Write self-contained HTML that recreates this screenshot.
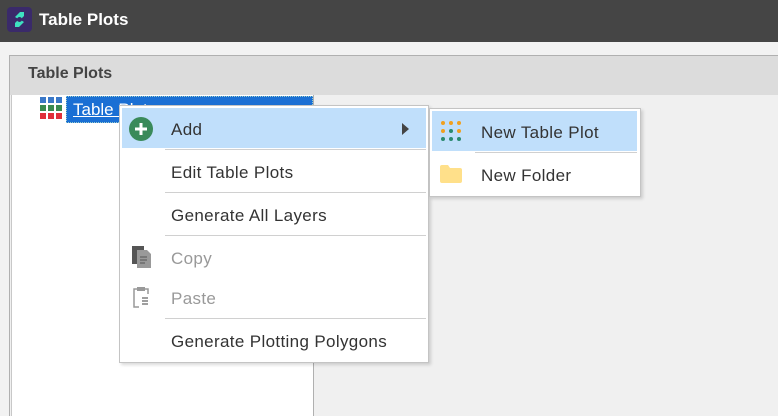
<!DOCTYPE html>
<html><head><style>
*{margin:0;padding:0;box-sizing:border-box}
html,body{width:778px;height:416px;overflow:hidden}
body{background:#f0f0f0;font-family:"Liberation Sans",sans-serif;position:relative}
.abs{position:absolute}
.t{position:absolute;font-size:17px;letter-spacing:0.35px;color:#333;white-space:nowrap;line-height:20px}
.sep{position:absolute;height:1px;background:#d0d0d0}
</style></head><body>
<div class="abs" style="left:0;top:0;width:778px;height:42px;background:#454545"></div>
<svg class="abs" style="left:7px;top:7px" width="25" height="25" viewBox="0 0 25 25"><rect width="25" height="25" rx="4" fill="#3a2a6a"/><path d="M8 10 L13 5 L17 5 L17 9 L13 13 Z" fill="#3ee0c0"/><path d="M17 15 L12 20 L8 20 L8 16 L12 12 Z" fill="#3ee0c0"/><circle cx="12.5" cy="12.5" r="2.5" fill="#3a2a6a"/></svg>
<div class="abs" style="left:39px;top:10px;color:#fff;font-weight:bold;font-size:17px">Table Plots</div>
<div class="abs" style="left:0;top:42px;width:778px;height:374px;background:#f2f2f2"></div>
<div class="abs" style="left:9px;top:55px;width:780px;height:380px;border:1px solid #b0b0b0;background:#f0f0f0"></div>
<div class="abs" style="left:10px;top:56px;width:770px;height:39px;background:#dcdcdc"></div>
<div class="abs" style="left:28px;top:65px;font-weight:bold;font-size:16px;color:#444">Table Plots</div>
<div class="abs" style="left:11px;top:95px;width:303px;height:340px;background:#fff;border:1px solid #b0b0b0;border-top:none;border-left-color:#c8c8c8"></div>
<svg class="abs" style="left:40px;top:97px" width="22" height="22" viewBox="0 0 22 22">
<g fill="#3a78c8"><rect x="0" y="0" width="6" height="6"/><rect x="8" y="0" width="6" height="6"/><rect x="16" y="0" width="6" height="6"/></g>
<g fill="#3a8a50"><rect x="0" y="8" width="6" height="6"/><rect x="8" y="8" width="6" height="6"/><rect x="16" y="8" width="6" height="6"/></g>
<g fill="#e0303a"><rect x="0" y="16" width="6" height="6"/><rect x="8" y="16" width="6" height="6"/><rect x="16" y="16" width="6" height="6"/></g></svg>
<div class="abs" style="left:66px;top:96px;width:247px;height:27px;background:#1a6fd4;border:1px dotted #9cc"></div>
<div class="abs" style="left:73px;top:100px;color:#fff;font-size:17px;text-decoration:underline">Table Plots</div>

<div class="abs" style="left:119px;top:105px;width:310px;height:258px;background:#fff;border:1px solid #c4c4c4;box-shadow:2px 2px 3px rgba(0,0,0,.15)"></div>
<div class="abs" style="left:122px;top:108px;width:304px;height:40px;background:#c0dffb"></div>
<svg class="abs" style="left:129px;top:117px" width="24" height="24" viewBox="0 0 24 24"><circle cx="12" cy="12" r="12" fill="#3a8a5a"/><path d="M12 6V18M6 12H18" stroke="#fff" stroke-width="3"/></svg>
<div class="t" style="left:171px;top:120px">Add</div>
<svg class="abs" style="left:402px;top:123px" width="8" height="12"><path d="M0 0L7 6L0 12Z" fill="#444"/></svg>
<div class="sep" style="left:165px;top:149px;width:261px"></div>
<div class="t" style="left:171px;top:163px">Edit Table Plots</div>
<div class="sep" style="left:165px;top:192px;width:261px"></div>
<div class="t" style="left:171px;top:206px">Generate All Layers</div>
<div class="sep" style="left:165px;top:235px;width:261px"></div>
<svg class="abs" style="left:132px;top:246px" width="20" height="22" viewBox="0 0 20 22"><rect x="0" y="0" width="12" height="18" fill="#555"/><path d="M5 4H15L19 8V22H5Z" fill="#999"/><path d="M8 11H15M8 14H15M8 17H13" stroke="#555" stroke-width="1"/></svg>
<div class="t" style="left:171px;top:249px;color:#999">Copy</div>
<svg class="abs" style="left:133px;top:286px" width="18" height="22" viewBox="0 0 18 22"><path d="M4 3H1V21H6" fill="none" stroke="#999" stroke-width="1.5"/><path d="M12 3H15V8" fill="none" stroke="#999" stroke-width="1.5"/><rect x="4" y="1" width="8" height="4" fill="#999"/><path d="M9 12H15M9 15H15M9 18H15" stroke="#666" stroke-width="1.2"/></svg>
<div class="t" style="left:171px;top:289px;color:#999">Paste</div>
<div class="sep" style="left:165px;top:318px;width:261px"></div>
<div class="t" style="left:171px;top:332px">Generate Plotting Polygons</div>

<div class="abs" style="left:429px;top:108px;width:212px;height:89px;background:#fff;border:1px solid #c4c4c4;box-shadow:2px 2px 3px rgba(0,0,0,.15)"></div>
<div class="abs" style="left:432px;top:111px;width:205px;height:40px;background:#c0dffb"></div>
<svg class="abs" style="left:441px;top:121px" width="20" height="20" viewBox="0 0 20 20">
<g fill="#f0a020"><circle cx="2" cy="2" r="2"/><circle cx="10" cy="2" r="2"/><circle cx="18" cy="2" r="2"/><circle cx="2" cy="10" r="2"/><circle cx="18" cy="10" r="2"/></g>
<g fill="#2a8a70"><circle cx="10" cy="10" r="2"/><circle cx="2" cy="18" r="2"/><circle cx="10" cy="18" r="2"/><circle cx="18" cy="18" r="2"/></g></svg>
<div class="t" style="left:481px;top:123px">New Table Plot</div>
<div class="sep" style="left:475px;top:152px;width:162px"></div>
<svg class="abs" style="left:440px;top:165px" width="22" height="18" viewBox="0 0 22 18"><path d="M0 2Q0 0 2 0H8L10 3H20Q22 3 22 5V16Q22 18 20 18H2Q0 18 0 16Z" fill="#ffe08a"/></svg>
<div class="t" style="left:481px;top:166px">New Folder</div>
</body></html>
